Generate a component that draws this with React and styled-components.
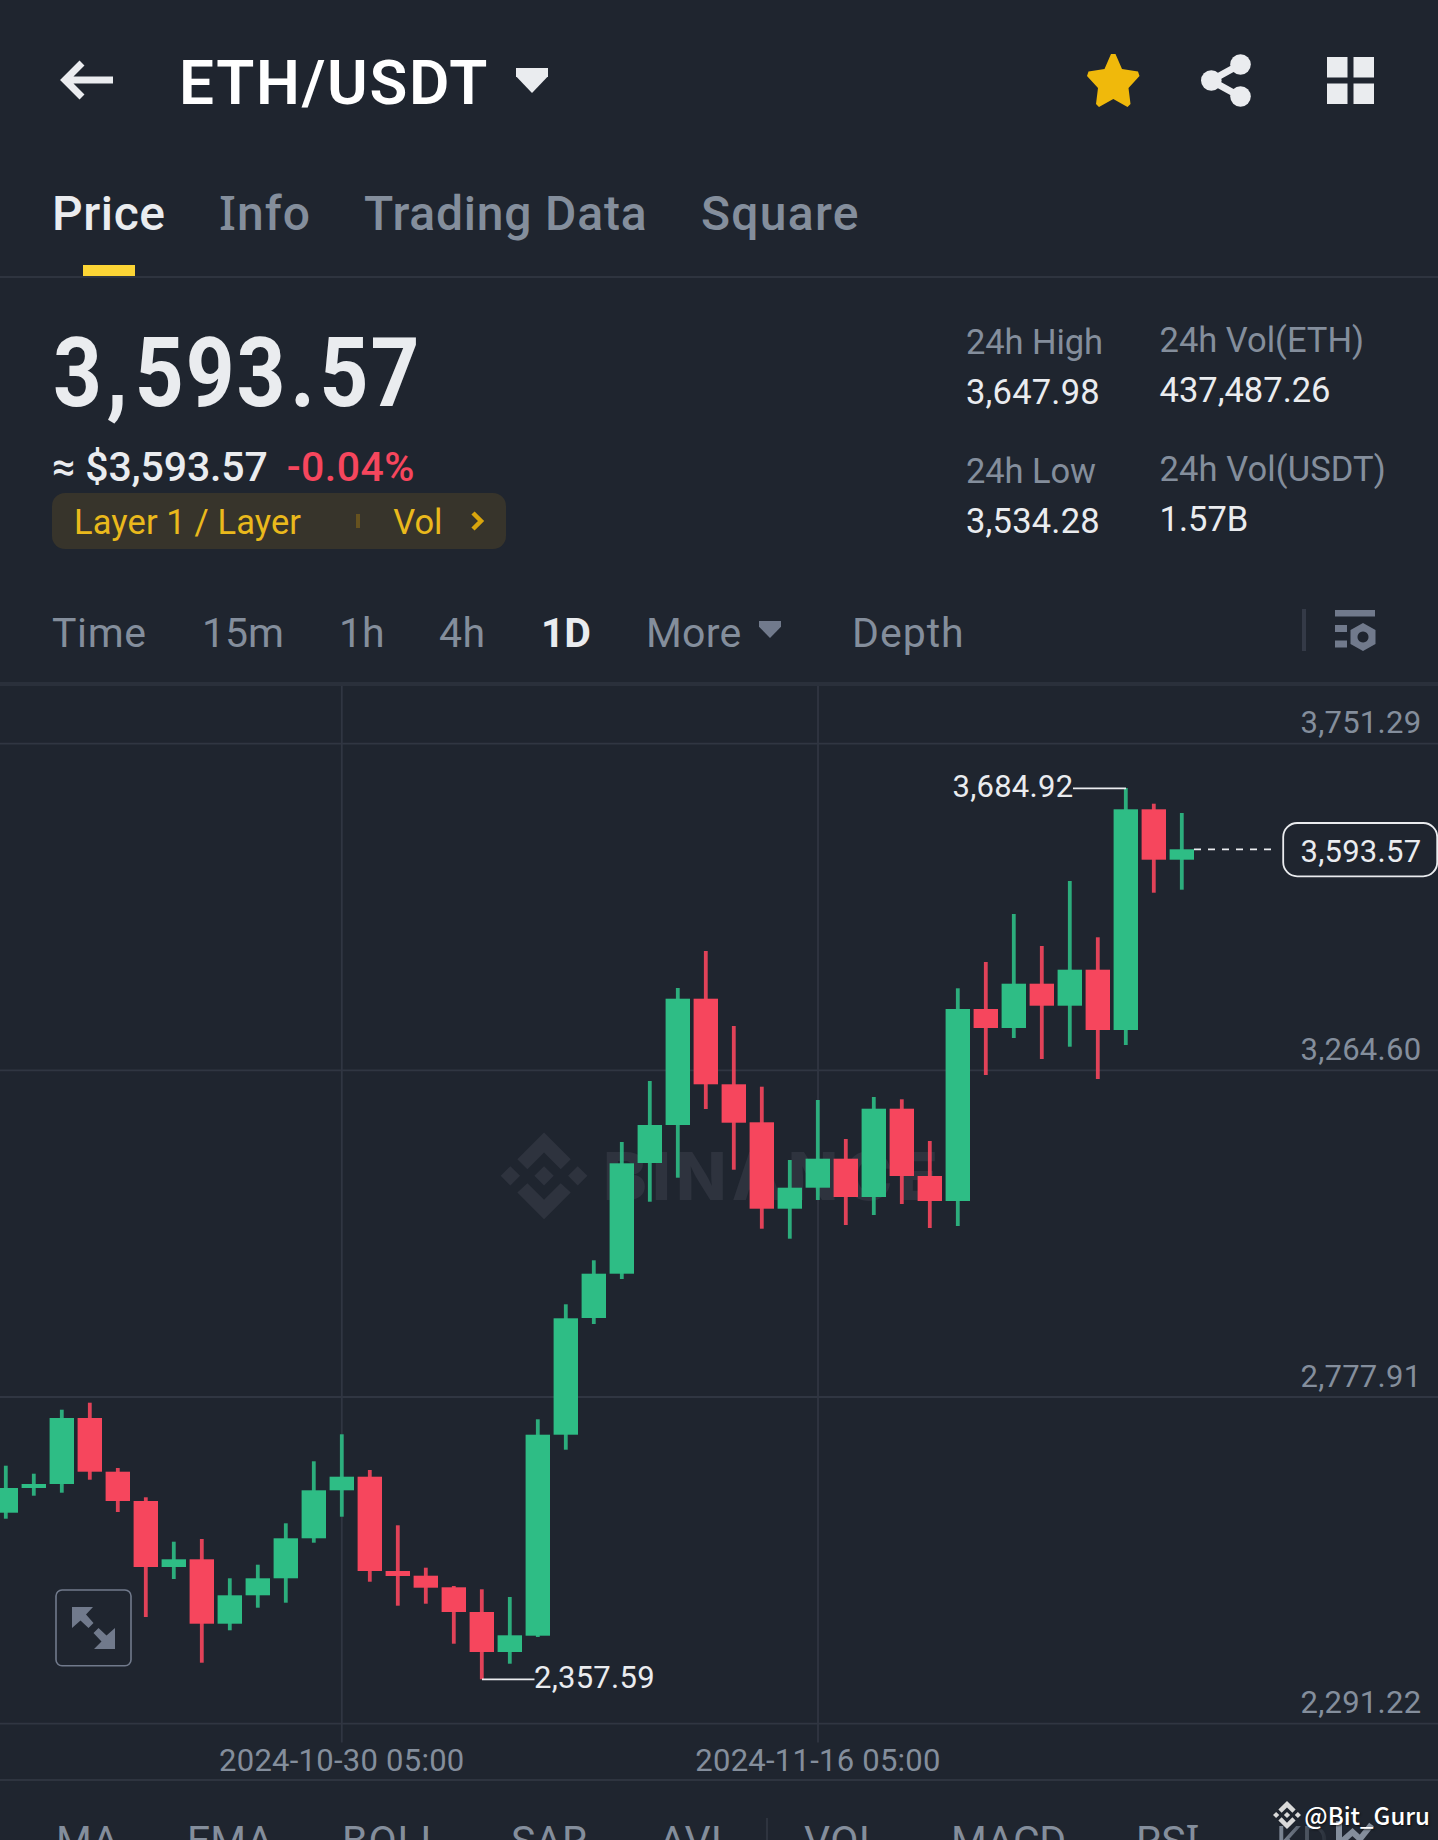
import React from 'react';
import styled, { createGlobalStyle, css } from 'styled-components';

const C = {
  bg: '#1f252f', line: '#2e343f', text: '#eaecef', muted: '#848e9c', icon: '#717a8c',
  up: '#2ebd85', down: '#f6465d', gold: '#f0b90b', soft: '#eaecef',
};

const Global = createGlobalStyle`
  html, body { margin: 0; background: ${C.bg}; }
  * { box-sizing: border-box; }
  svg { display: block; flex: none; overflow: visible; }
`;

const Screen = styled.main`
  width: 1438px;
  height: 1840px;
  overflow: hidden;
  position: relative;
  display: flex;
  flex-direction: column;
  background: ${C.bg};
  color: ${C.text};
  font-family: Roboto, "Noto Sans", sans-serif;
`;

const Label = styled.span`
  white-space: nowrap;
  line-height: 1;
  font-size: ${(p) => p.$size}px;
  font-weight: ${(p) => p.$weight || 400};
  color: ${(p) => p.$color || C.muted};
  letter-spacing: ${(p) => p.$track || 0}px;
`;
const SerifCap = styled.span`
  font-family: "Noto Sans", sans-serif;
  line-height: 0;
`;

const Header = styled.header`
  height: 164px;
  flex: none;
  display: flex;
  align-items: center;
  padding: 0 64px 4px 61px;
`;
const BackButton = styled.div` width: 118px; `;
const Pair = styled.div`
  display: flex;
  align-items: center;
  gap: 27px;
  flex: 1;
`;
const PairName = styled(Label)` margin-top: 6px; `;
const Actions = styled.div` display: flex; align-items: center; `;
const Action = styled.div` margin-left: ${(p) => p.$gap || 0}px; `;

const Tabs = styled.nav`
  height: 114px;
  flex: none;
  display: flex;
  border-bottom: 2px solid ${C.line};
  padding-left: 52px;
`;
const Tab = styled.div`
  width: ${(p) => p.$w}px;
  display: flex;
  flex-direction: column;
  justify-content: space-between;
  padding-top: 26px;
`;
const Underline = styled.i`
  width: 52px;
  height: 11px;
  margin-left: 30.5px;
  background: #fcd535;
`;

const Summary = styled.section`
  height: 292px;
  flex: none;
  display: flex;
  padding: 0 0 0 52px;
`;
const Quote = styled.div`
  width: 914px;
  display: flex;
  flex-direction: column;
  align-items: flex-start;
`;
const BigPrice = styled(Label)`
  margin: 47px 0 0 1px;
  transform: scaleX(0.88);
  transform-origin: left center;
`;
const Separator = styled.span` padding: 0 ${(p) => p.$right}px 0 ${(p) => p.$left}px; `;
const Equivalent = styled.div`
  display: flex;
  gap: 19px;
  margin-top: 25px;
  height: 46px;
`;
const TagPill = styled.div`
  width: 454px;
  height: 56px;
  border-radius: 13px;
  background: #37342b;
  display: flex;
  align-items: center;
  padding: 0 22px;
`;
const TagCell = styled.div`
  width: ${(p) => p.$w}px;
  display: flex;
  padding-top: 2px;
`;
const TagRule = styled.i`
  width: 4px;
  height: 14px;
  background: #66521f;
  margin-right: 33px;
`;
const StatColumn = styled.div`
  width: ${(p) => p.$w}px;
  padding-top: ${(p) => p.$top}px;
  display: flex;
  flex-direction: column;
  gap: 44px;
`;
const Stat = styled.div`
  display: flex;
  flex-direction: column;
  gap: 15.5px;
`;

const Intervals = styled.nav`
  height: 116px;
  flex: none;
  display: flex;
  border-bottom: 4px solid #2a303b;
  padding: 39px 62px 0 52px;
`;
const Interval = styled.div`
  width: ${(p) => p.$w}px;
  display: flex;
  gap: 17px;
  padding-top: 4px;
  svg { margin-top: 8px; }
`;
const IntervalRule = styled.i`
  width: 4px;
  height: 42px;
  margin: 0 29px 0 auto;
  background: #343a47;
`;

const ChartArea = styled.section`
  height: 1095px;
  flex: none;
  border-bottom: 2px solid ${C.line};
`;

const Indicators = styled.nav`
  flex: 1;
  display: flex;
  padding-left: 56px;
  overflow: hidden;
`;
const Indicator = styled.div`
  width: ${(p) => p.$w}px;
  flex: none;
  padding-top: 40px;
  ${(p) => p.$fade && css`
    overflow: hidden;
    -webkit-mask-image: linear-gradient(90deg, #000 0, transparent 56px);
    mask-image: linear-gradient(90deg, #000 0, transparent 56px);
  `}
`;
const IndicatorRule = styled.i`
  width: 2px;
  height: 40px;
  margin: 37px 36px 0 0;
  background: ${C.line};
`;
const ChartMode = styled.div` padding-top: 39px; `;

const Signature = styled.div`
  position: absolute;
  right: 8px;
  bottom: 9px;
  display: flex;
  align-items: center;
  gap: 3px;
  font: 500 24px/32px "Noto Sans CJK SC", sans-serif;
  color: #fff;
  text-shadow: 1px 1px 2px rgba(0, 0, 0, 0.6);
`;

const ChartText = styled.text`
  font: 400 31px Roboto, sans-serif;
  letter-spacing: 0.25px;
  fill: ${(p) => p.$fill || C.muted};
`;

// [direction, body top, body bottom, wick top, wick bottom]
const CANDLES = [
  [1, 1488, 1512.7, 1465.7, 1518.7], [1, 1484, 1488, 1473.7, 1495.7],
  [1, 1418, 1484, 1409.7, 1492.7], [0, 1418, 1471.7, 1402.7, 1479.7],
  [0, 1471.7, 1501, 1468, 1512], [0, 1501, 1567, 1497.3, 1617],
  [1, 1559.3, 1567, 1541.7, 1579], [0, 1559.3, 1623.7, 1539, 1662.7],
  [1, 1595.3, 1623.7, 1578.3, 1630.3], [1, 1578.3, 1595.3, 1564.7, 1607.7],
  [1, 1538.3, 1578.3, 1523.3, 1602.7], [1, 1490.3, 1538.3, 1461.3, 1542.7],
  [1, 1476.7, 1490.3, 1434.3, 1516.7], [0, 1476.7, 1571, 1470, 1581.7],
  [0, 1571, 1576, 1525.3, 1605.7], [0, 1575.7, 1587.7, 1567.7, 1603.7],
  [0, 1587.3, 1612, 1586, 1643.7], [0, 1612, 1652, 1589.3, 1679.3],
  [1, 1635.3, 1652, 1597, 1663.7], [1, 1434.7, 1635.7, 1419.3, 1637],
  [1, 1318.3, 1434.7, 1304.3, 1449.7], [1, 1273.7, 1318, 1260.3, 1324],
  [1, 1163.3, 1273.7, 1142, 1279], [1, 1125, 1163, 1081, 1201.7],
  [1, 998.7, 1125, 988, 1177.7], [0, 998.7, 1084.3, 951, 1109],
  [0, 1084.3, 1122.7, 1026, 1169.7], [0, 1122.3, 1208.7, 1086.7, 1228.7],
  [1, 1187.7, 1208.7, 1160, 1238.7], [1, 1158.7, 1187.7, 1100, 1200],
  [0, 1158.7, 1197, 1139, 1225], [1, 1108.7, 1197, 1097, 1215],
  [0, 1108.7, 1176, 1099.3, 1204], [0, 1176, 1201, 1141, 1228],
  [1, 1009, 1201, 988.3, 1226], [0, 1009, 1028, 962, 1075],
  [1, 983.7, 1028, 914, 1038], [0, 983.7, 1005.7, 946, 1059],
  [1, 969.7, 1005.7, 881, 1046.7], [0, 969.7, 1030, 937.3, 1079],
  [1, 809.3, 1030, 788, 1045], [0, 809.3, 859.7, 803.7, 892.7],
  [1, 849.3, 859.7, 813, 889.7],
];
const GRID = [[743.7, '3,751.29'], [1070.3, '3,264.60'], [1397, '2,777.91'], [1723.7, '2,291.22']];
const DATES = [[341.8, '2024-10-30 05:00'], [818, '2024-11-16 05:00']];

const BinanceMark = ({ x, y, size, fill }) => (
  <svg x={x} y={y} width={size} height={size} viewBox="0 0 260 260" fill={fill}>
    <path d="M130 0L210 80L180 110L130 60L80 110L50 80Z" />
    <path d="M130 260L210 180L180 152L130 202L80 152L50 180Z" />
    <path d="M0 130L29 101L58 130L29 159ZM101 130L130 101L159 130L130 159ZM202 130L231 101L260 130L231 159Z" />
  </svg>
);

const Candle = ({ index, data: [up, top, bottom, high, low] }) => {
  const x = 5.8 + 28 * index;
  const fill = up ? C.up : C.down;
  return (
    <g fill={fill}>
      <rect x={x - 1.9} y={high} width="3.8" height={low - high} opacity="0.9" />
      <rect x={x - 12.2} y={top} width="24.4" height={bottom - top} />
    </g>
  );
};

const Chart = () => (
  <svg width="1438" height="1093" viewBox="0 686 1438 1093">
    <g stroke="#303642" strokeWidth="1.8">
      {GRID.map(([y]) => <line key={y} x1="0" x2="1438" y1={y} y2={y} />)}
      {DATES.map(([x]) => <line key={x} x1={x} x2={x} y1="686" y2="1742.5" />)}
    </g>
    <BinanceMark x={500.7} y={1132.5} size={86.7} fill="#2e333e" />
    <text x="603" y="1200" fill="#2e333e" fontFamily="Inter, sans-serif" fontSize="66" fontWeight="800" textLength="335">BINANCE</text>
    {CANDLES.map((d, i) => <Candle key={i} index={i} data={d} />)}
    {GRID.map(([y, t]) => <ChartText key={t} x="1300.5" y={y - 10.5}>{t}</ChartText>)}
    {DATES.map(([x, t]) => <ChartText key={t} x={x - 122.7} y="1770.5">{t}</ChartText>)}
    <g stroke={C.soft} strokeWidth="1.8" fill="none">
      <path d="M1073 788.3H1126M482 1679.3H534.5" />
      <path d="M1194 849.3H1271" strokeDasharray="7 7" />
      <rect x="1283.2" y="823" width="154" height="53.3" rx="14" />
    </g>
    <ChartText $fill={C.text} x="952.5" y="796.5">3,684.92</ChartText>
    <ChartText $fill={C.text} x="534" y="1688">2,357.59</ChartText>
    <ChartText $fill={C.text} x="1300.5" y="861.5">3,593.57</ChartText>
    <rect x="56" y="1590" width="75" height="75.7" rx="6" fill={C.bg} stroke={C.icon} strokeWidth="1.6" />
    <path fill={C.icon} d="M72 1607H93L86 1614.500L93.500 1623L88.500 1628L80.500 1620.500L72 1628ZM115 1649H94L101.500 1641.500L93.500 1633L98.500 1628L106.500 1635.500L115 1628Z" />
  </svg>
);

const TriangleDown = ({ w, h, fill }) => (
  <svg width={w} height={h} viewBox="0 0 32 24" preserveAspectRatio="none"><path fill={fill} d="M0 0H32V8L16 24L0 8Z" /></svg>
);

const StatItem = ({ label, value, lt, vt }) => (
  <Stat>
    <Label $size={34.500} $track={lt}>{label}</Label>
    <Label $size={34.500} $color={C.text} $track={vt}>{value}</Label>
  </Stat>
);

export default function App() {
  return (
    <>
      <Global />
      <Screen>
        <Header>
          <BackButton>
            <svg width="52" height="40" viewBox="0 0 52 40"><path d="M21 3L4 20L21 37M4 20H52" fill="none" stroke={C.soft} strokeWidth="7" /></svg>
          </BackButton>
          <Pair>
            <PairName $size={62} $weight={600} $color="#fff" $track={1.7}>ETH/USDT</PairName>
            <TriangleDown w={32} h={25} fill={C.soft} />
          </Pair>
          <Actions>
            <Action>
              <svg width="52" height="53" viewBox="0 0 52 53"><path fill={C.gold} d="M24 0H28.500L35 15L51 17.500L52.500 22L41.500 34L43.500 50L40.500 53L26.300 45L12 53L9 50L11 34L0 22L1.500 17.500L17.500 15Z" /></svg>
            </Action>
            <Action $gap={62}>
              <svg width="50" height="53" viewBox="0 0 50 53">
                <path d="M10 26.500L40 10M10 26.500L40 43" stroke={C.soft} strokeWidth="7" />
                <g fill={C.soft}><circle cx="10.300" cy="26.500" r="10.300" /><circle cx="39.500" cy="10.500" r="10.300" /><circle cx="39.500" cy="42.500" r="10.300" /></g>
              </svg>
            </Action>
            <Action $gap={76}>
              <svg width="47" height="47" viewBox="0 0 47 47"><path fill={C.soft} d="M0 0H20.500V20.500H0ZM26.500 0H47V20.500H26.500ZM0 26.500H20.500V47H0ZM26.500 26.500H47V47H26.500Z" /></svg>
            </Action>
          </Actions>
        </Header>

        <Tabs>
          <Tab $w={167}><Label $size={48} $weight={500} $color={C.text} $track={0.6}>Price</Label><Underline /></Tab>
          <Tab $w={145}><Label $size={48} $weight={500} $track={1}><SerifCap>I</SerifCap>nfo</Label></Tab>
          <Tab $w={337}><Label $size={48} $weight={500} $track={0.8}>Trading Data</Label></Tab>
          <Tab $w={180}><Label $size={48} $weight={500} $track={1.3}>Square</Label></Tab>
        </Tabs>

        <Summary>
          <Quote>
            <BigPrice $size={97} $weight={700} $color={C.text} $track={2.2}>
              3<Separator $left={3} $right={6}>,</Separator>593<Separator $left={3} $right={3}>.</Separator>57
            </BigPrice>
            <Equivalent>
              <Label $size={41} $weight={500} $color={C.text} $track={-0.15}>≈ $3,593.57</Label>
              <Label $size={41} $weight={500} $color={C.down} $track={0.5}>-0.04%</Label>
            </Equivalent>
            <TagPill>
              <TagCell $w={283}><Label $size={34.500} $color="#eab91c" $track={0.1}>Layer 1 / Layer</Label></TagCell>
              <TagRule />
              <TagCell $w={78}><Label $size={34.500} $color="#eab91c">Vol</Label></TagCell>
              <svg width="13" height="20" viewBox="0 0 13 20"><path d="M2 2L10 10L2 18" fill="none" stroke="#d9a50d" strokeWidth="4.500" /></svg>
            </TagPill>
          </Quote>
          <StatColumn $w={193.5} $top={47}>
            <StatItem label="24h High" value="3,647.98" lt={-0.1} vt={0.2} />
            <StatItem label="24h Low" value="3,534.28" lt={-0.1} vt={0.2} />
          </StatColumn>
          <StatColumn $w={260} $top={45}>
            <StatItem label="24h Vol(ETH)" value="437,487.26" />
            <StatItem label="24h Vol(USDT)" value="1.57B" lt={0.1} />
          </StatColumn>
        </Summary>

        <Intervals>
          <Interval $w={150}><Label $size={41} $track={0.6}>Time</Label></Interval>
          <Interval $w={137}><Label $size={41}>15m</Label></Interval>
          <Interval $w={100}><Label $size={41}>1h</Label></Interval>
          <Interval $w={102}><Label $size={41} $track={0.5}>4h</Label></Interval>
          <Interval $w={105}><Label $size={41} $weight={700} $color={C.text} $track={-0.3}>1D</Label></Interval>
          <Interval $w={206}><Label $size={41} $track={0.3}>More</Label><TriangleDown w={22} h={17} fill={C.icon} /></Interval>
          <Interval $w={140}><Label $size={41} $track={1}>Depth</Label></Interval>
          <IntervalRule />
          <svg width="41" height="42" viewBox="0 0 41 42" fill={C.icon}>
            <path d="M0 1H40V7.500H0ZM0 16H12V23H0ZM0 31.500H12V38.500H0Z" />
            <path fillRule="evenodd" d="M28 14L40.500 21V35L28 42L15.500 35V21ZM28 22.500a5.500 5.500 0 1 0 .01 0Z" />
          </svg>
        </Intervals>

        <ChartArea><Chart /></ChartArea>

        <Indicators>
          <Indicator $w={131}><Label $size={41}>MA</Label></Indicator>
          <Indicator $w={155}><Label $size={41}>EMA</Label></Indicator>
          <Indicator $w={169}><Label $size={41} $track={0.9}>BOLL</Label></Indicator>
          <Indicator $w={148}><Label $size={41}>SAR</Label></Indicator>
          <Indicator $w={107}><Label $size={41} $track={0.5}>AVL</Label></Indicator>
          <IndicatorRule />
          <Indicator $w={147}><Label $size={41} $track={0.5}>VOL</Label></Indicator>
          <Indicator $w={185}><Label $size={41} $track={-0.4}>MACD</Label></Indicator>
          <Indicator $w={140}><Label $size={41}>RS<SerifCap>I</SerifCap></Label></Indicator>
          <Indicator $w={59} $fade><Label $size={41}>KDJ</Label></Indicator>
          <ChartMode>
            <svg width="38" height="24" viewBox="0 0 38 24" fill="none" stroke={C.muted}><path d="M4 1V24" strokeWidth="6" /><path d="M4 24L17.500 12L25 19L36.500 4.500" strokeWidth="6" /></svg>
          </ChartMode>
        </Indicators>

        <Signature>
          <BinanceMark size={28} fill="#d9d9d9" />
          <span>@Bit_Guru</span>
        </Signature>
      </Screen>
    </>
  );
}
